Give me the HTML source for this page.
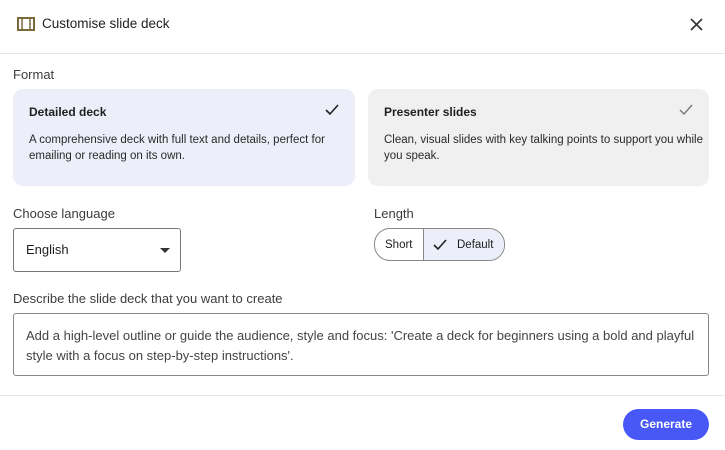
<!DOCTYPE html><html><head><style>
body{margin:0;width:725px;height:450px;background:#fff;font-family:"Liberation Sans",sans-serif;color:#1f1f1f;position:relative;overflow:hidden}
.a{position:absolute}
.lbl{font-size:13px;color:#3c3c3c}
.card{position:absolute;top:89px;height:97px;border-radius:10px}
.card b{position:absolute;left:16px;top:16px;font-size:12px}
.card p{position:absolute;left:16px;top:43px;margin:0;font-size:11.5px;line-height:16px;width:320px;color:#2a2a2a}
</style></head><body>
<svg class="a" style="left:17px;top:17px" width="18" height="14"><rect x="1" y="1" width="16" height="12" fill="none" stroke="#7a6a3a" stroke-width="2"/><line x1="5" y1="1" x2="5" y2="13" stroke="#7a6a3a" stroke-width="1.5"/><line x1="13" y1="1" x2="13" y2="13" stroke="#7a6a3a" stroke-width="1.5"/></svg>
<div class="a" style="left:42px;top:16px;font-size:13.5px">Customise slide deck</div>
<svg class="a" style="left:690px;top:18px" width="13" height="13"><path d="M1 1L12 12M12 1L1 12" stroke="#333" stroke-width="1.6"/></svg>
<div class="a" style="left:0;top:53px;width:725px;height:1px;background:#e3e3e8"></div>
<div class="a lbl" style="left:13px;top:67px">Format</div>
<div class="card" style="left:13px;width:342px;background:#eceef9"><b>Detailed deck</b>
<svg class="a" style="left:312px;top:15px" width="14" height="12"><path d="M1 6L5 10L13 1" fill="none" stroke="#222" stroke-width="1.6"/></svg>
<p>A comprehensive deck with full text and details, perfect for emailing or reading on its own.</p></div>
<div class="card" style="left:368px;width:341px;background:#f0f0f0"><b>Presenter slides</b>
<svg class="a" style="left:311px;top:15px" width="14" height="12"><path d="M1 6L5 10L13 1" fill="none" stroke="#777" stroke-width="1.4"/></svg>
<p style="width:335px">Clean, visual slides with key talking points to support you while<br>you speak.</p></div>
<div class="a lbl" style="left:13px;top:206px">Choose language</div>
<div class="a" style="left:13px;top:228px;width:166px;height:42px;border:1px solid #777;border-radius:3px"><span class="a" style="left:12px;top:13px;font-size:13px">English</span><svg class="a" style="left:146px;top:19px" width="10" height="5"><path d="M0 0H10L5 5Z" fill="#333"/></svg></div>
<div class="a lbl" style="left:374px;top:206px">Length</div>
<div class="a" style="left:374px;top:228px;width:129px;height:31px;border:1px solid #888;border-radius:16px;overflow:hidden">
<div class="a" style="left:48px;top:0;width:81px;height:31px;background:#eceef9;border-left:1px solid #888"></div>
<span class="a" style="left:10px;top:10px;font-size:11.5px">Short</span>
<svg class="a" style="left:58px;top:10px" width="14" height="12"><path d="M1 6L5 10L13 1" fill="none" stroke="#222" stroke-width="1.6"/></svg>
<span class="a" style="left:82px;top:10px;font-size:11.5px">Default</span></div>
<div class="a lbl" style="left:13px;top:291px">Describe the slide deck that you want to create</div>
<div class="a" style="left:13px;top:313px;width:694px;height:61px;border:1px solid #888;border-radius:3px"><div class="a" style="left:12px;top:12px;font-size:13px;line-height:20px;color:#444;width:680px">Add a high-level outline or guide the audience, style and focus: 'Create a deck for beginners using a bold and playful style with a focus on step-by-step instructions'.</div></div>
<div class="a" style="left:0;top:395px;width:725px;height:1px;background:#e6e6ea"></div>
<div class="a" style="left:623px;top:409px;width:86px;height:31px;border-radius:16px;background:#4758f7;color:#fff;font-size:12px;text-align:center;line-height:31px;font-weight:bold">Generate</div>
</body></html>
